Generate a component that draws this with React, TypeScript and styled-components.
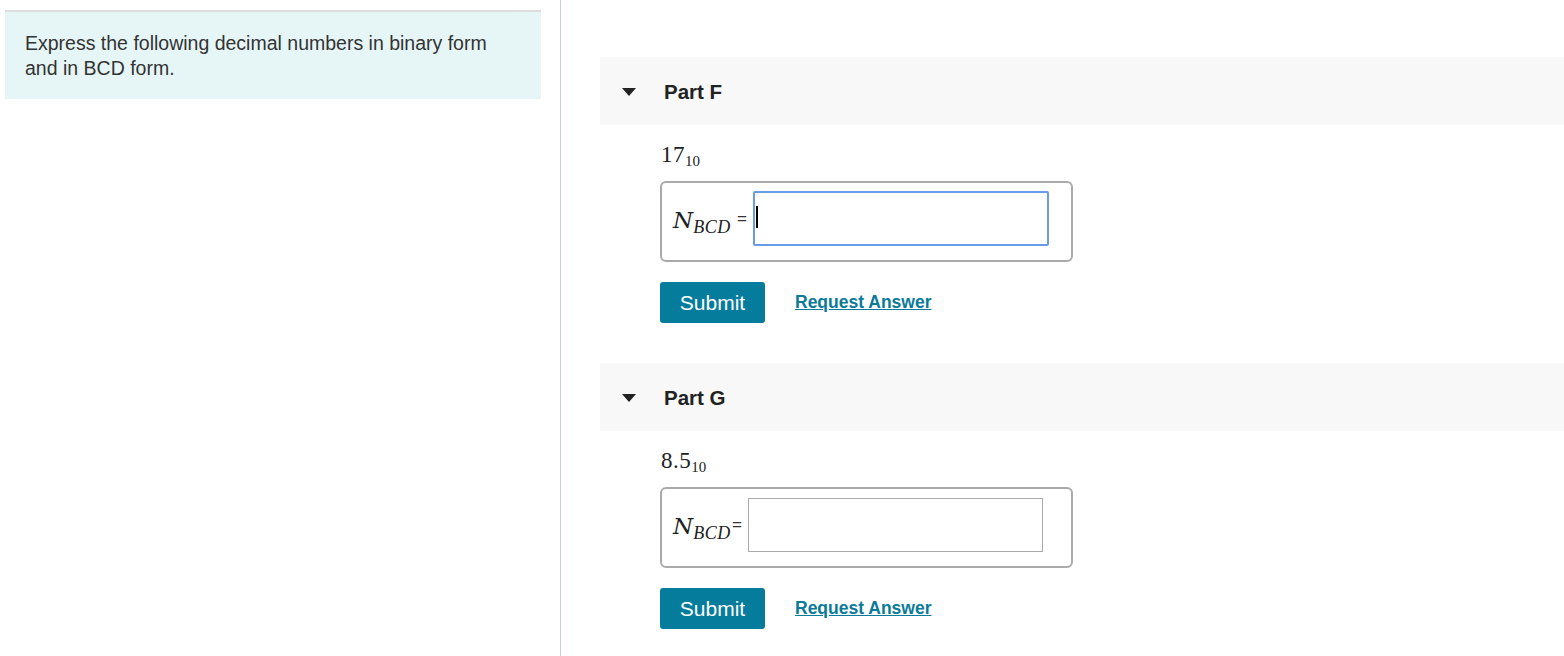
import React from "react";
import styled, { createGlobalStyle } from "styled-components";

const Global = createGlobalStyle`
  html, body { margin: 0; padding: 0; background: #fff; }
  body { font-family: "Liberation Sans", Arial, sans-serif; color: #333; }
`;

const Page = styled.div`
  display: flex;
  min-height: 656px;
`;

const LeftCol = styled.div`
  width: 561px;
  flex: none;
  border-right: 1px solid #c3d3e4;
  padding-top: 10px;
  box-sizing: border-box;
  min-height: 656px;
`;

const Intro = styled.div`
  margin: 0 19px 0 5px;
  background: #e6f6f7;
  border-top: 2px solid #dddddd;
  padding: 19px 20px 16px 20px;
  font-size: 19.5px;
  line-height: 25px;
  color: #333;
  height: 52px;
`;

const RightCol = styled.div`
  flex: 1;
  padding: 57px 0 0 39px;
`;

const Header = styled.div`
  height: 68px;
  background: #f8f8f8;
  display: flex;
  align-items: center;
  padding-left: 22px;
`;

const Tri = styled.span`
  width: 0;
  height: 0;
  border-left: 7px solid transparent;
  border-right: 7px solid transparent;
  border-top: 8px solid #222;
  margin-right: 28px;
  margin-top: 1px;
`;

const PartTitle = styled.span`
  font-weight: bold;
  font-size: 20.5px;
  color: #222;
  margin-top: 2px;
`;

const Body = styled.div`
  padding: 17px 0 40px 60px;
`;

const MathLine = styled.div`
  font-family: "Liberation Serif", "DejaVu Serif", serif;
  font-size: 23px;
  line-height: 24px;
  height: 24px;
  margin-bottom: 15px;
  padding-left: 1px;
  padding-top: 1px;
  box-sizing: border-box;
  letter-spacing: 0.5px;
  color: #222;
  sub {
    font-size: 15px;
    letter-spacing: 0;
    vertical-align: -4px;
    line-height: 0;
  }
`;

const AnswerBox = styled.div`
  width: 413px;
  box-sizing: border-box;
  border: 2px solid #aaaaaa;
  border-radius: 6px;
  padding: 8px 21px 14px 11px;
  display: flex;
  align-items: center;
`;

const Label = styled.span`
  font-family: "DejaVu Serif", "Liberation Serif", serif;
  font-style: italic;
  font-size: 23px;
  color: #222;
  white-space: nowrap;
  margin-top: 2px;
  sub {
    font-family: "Liberation Serif", serif;
    font-size: 18px;
    letter-spacing: 0.6px;
    vertical-align: -5px;
    line-height: 0;
  }
`;

const Eq = styled.span<{ $before: number }>`
  font-family: "Liberation Sans", Arial, sans-serif;
  font-size: 17px;
  color: #333;
  margin: 0 6px 0 ${(p) => p.$before}px;
`;

const Field = styled.div<{ $focused?: boolean; $w: number }>`
  width: ${(p) => p.$w}px;
  height: ${(p) => (p.$focused ? 55 : 54)}px;
  box-sizing: border-box;
  border: ${(p) => (p.$focused ? "2px solid #6a9be8" : "1px solid #aaaaaa")};
  border-radius: ${(p) => (p.$focused ? 2 : 0)}px;
  background: #fff;
  position: relative;
  margin-top: ${(p) => (p.$focused ? 0 : 1)}px;
`;

const Caret = styled.span`
  position: absolute;
  left: 1px;
  top: 13px;
  width: 2px;
  height: 22px;
  background: #000;
`;

const Actions = styled.div`
  display: flex;
  align-items: center;
  margin-top: 20px;
`;

const SubmitBtn = styled.button`
  width: 105px;
  height: 41px;
  border: none;
  border-radius: 3px;
  background: #067c9c;
  color: #fff;
  font-family: "Liberation Sans", Arial, sans-serif;
  font-size: 21px;
  padding: 0;
  cursor: pointer;
`;

const RequestLink = styled.a`
  margin-left: 30px;
  font-family: "Liberation Sans", Arial, sans-serif;
  font-weight: bold;
  font-size: 17.5px;
  color: #0a7a99;
  text-decoration: underline;
  cursor: pointer;
`;

type PartProps = {
  title: string;
  value: string;
  focused?: boolean;
};

const Part: React.FC<PartProps> = ({ title, value, focused }) => (
  <section>
    <Header>
      <Tri />
      <PartTitle>{title}</PartTitle>
    </Header>
    <Body>
      <MathLine>
        {value}
        <sub>10</sub>
      </MathLine>
      <AnswerBox>
        <Label>
          N<sub>BCD</sub>
        </Label>
        <Eq $before={focused ? 6 : 1}>=</Eq>
        <Field $focused={focused} $w={focused ? 296 : 295}>
          {focused && <Caret />}
        </Field>
      </AnswerBox>
      <Actions>
        <SubmitBtn>Submit</SubmitBtn>
        <RequestLink>Request Answer</RequestLink>
      </Actions>
    </Body>
  </section>
);

export default function App() {
  return (
    <>
      <Global />
      <Page>
        <LeftCol>
          <Intro>
            Express the following decimal numbers in binary form
            <br />
            and in BCD form.
          </Intro>
        </LeftCol>
        <RightCol>
          <Part title="Part F" value="17" focused />
          <Part title="Part G" value="8.5" />
        </RightCol>
      </Page>
    </>
  );
}
